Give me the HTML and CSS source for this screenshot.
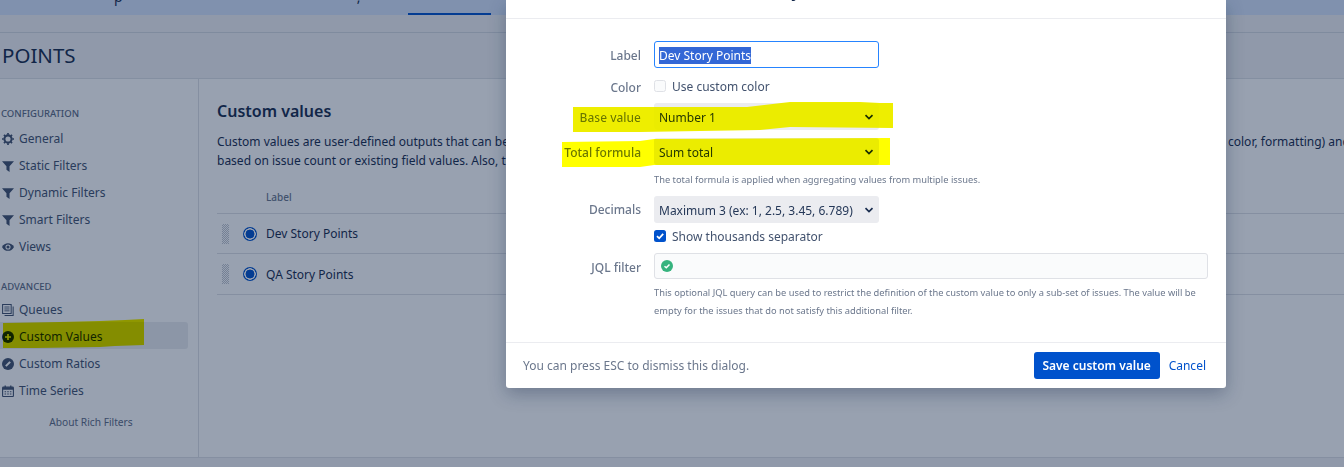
FILE: index.html
```html
<!DOCTYPE html>
<html lang="en">
<head>
<meta charset="utf-8">
<title>Custom values</title>
<link rel="stylesheet" href="styles.css">
</head>
<body>
<div class="banner"><span class="b1">p</span><span class="b2">,</span><a class="b3" href="#">Learn more</a></div>
<div class="subbar"></div>
<header class="pagehead"><h1>POINTS</h1></header>
<div class="layout">
  <nav class="side">
    <div class="sec">CONFIGURATION</div>
    <a class="item"><svg class="ic" viewBox="0 0 14 14"><circle cx="7" cy="7" r="4.2" fill="none" stroke="#42526e" stroke-width="2.4"/><path d="M6 0h2v2H6zM6 12h2v2H6zM0 6h2v2H0zM12 6h2v2h-2zM1.600 3 3 1.600l1.400 1.400L3 4.400zM9.600 11 11 9.600l1.400 1.400-1.400 1.400zM11 1.600 12.400 3 11 4.400 9.600 3zM3 9.600 4.400 11 3 12.400 1.600 11z" fill="#42526e"/></svg>General</a>
    <a class="item"><svg class="ic" viewBox="0 0 14 14"><path d="M0 1.500h14L8.800 7.400V14L5.200 11.500V7.400z" fill="#42526e"/></svg>Static Filters</a>
    <a class="item"><svg class="ic" viewBox="0 0 14 14"><path d="M0 1.500h14L8.800 7.400V14L5.200 11.500V7.400z" fill="#42526e"/></svg>Dynamic Filters</a>
    <a class="item"><svg class="ic" viewBox="0 0 14 14"><path d="M0 1.500h14L8.800 7.400V14L5.200 11.500V7.400z" fill="#42526e"/></svg>Smart Filters</a>
    <a class="item"><svg class="ic" viewBox="0 0 14 14"><path d="M0 7c1.700-3.200 4-4.500 7-4.500s5.300 1.300 7 4.500c-1.700 3.200-4 4.500-7 4.500S1.700 10.200 0 7z" fill="#42526e"/><circle cx="7" cy="7" r="3" fill="#fff"/><circle cx="7" cy="7" r="1.800" fill="#42526e"/></svg>Views</a>
    <div class="sec sec2">ADVANCED</div>
    <a class="item"><svg class="ic" viewBox="0 0 14 14"><path d="M.7.700h10v10.300H.7z" fill="none" stroke="#42526e" stroke-width="1.200"/><path d="M2.800 3.500h6M2.800 5.800h6M2.800 8h6" stroke="#42526e"/><path d="M13 3v10.300H3" fill="none" stroke="#42526e" stroke-width="1.200"/></svg>Queues</a>
    <a class="item on"><svg class="ic" viewBox="0 0 14 14"><circle cx="7" cy="7" r="7" fill="#172b4d"/><path d="M3.500 7h7M7 3.500v7" stroke="#fff" stroke-width="1.900"/></svg>Custom Values</a>
    <a class="item"><svg class="ic" viewBox="0 0 14 14"><circle cx="7" cy="7" r="7" fill="#42526e"/><path d="M4.500 9.500 9.500 4.500" stroke="#fff" stroke-width="2.400"/></svg>Custom Ratios</a>
    <a class="item"><svg class="ic" viewBox="0 0 14 14"><rect x=".7" y="2.500" width="12.600" height="11" rx="1" fill="none" stroke="#42526e" stroke-width="1.300"/><path d="M1 2.500h12V5.500H1zM3 .5h1.500v2H3zM9.500 .5H11v2H9.500z" fill="#42526e"/><path d="M3 7.800h1.800M6.100 7.800h1.800M9.200 7.800H11M3 10.500h1.800M6.100 10.500h1.800M9.200 10.500H11" stroke="#42526e" stroke-width="1.300"/></svg>Time Series</a>
    <a class="about">About Rich Filters</a>
  </nav>
  <main class="content">
    <h2>Custom values</h2>
    <div class="para">
      <div class="line"><span class="lead">Custom values are user-defined outputs that can be displayed in views and have their own display settings (</span><span>color, formatting) and</span></div>
      <div class="line">based on issue count or existing field values. Also, they can be used in sorting and grouping.</div>
    </div>
    <div class="thead">Label</div>
    <div class="row"><span class="grip"></span><span class="radio"></span><span>Dev Story Points</span></div>
    <div class="row"><span class="grip"></span><span class="radio"></span><span>QA Story Points</span></div>
  </main>
</div>
<div class="pagefoot"></div>

<div class="blanket"></div>

<section class="modal">
  <div class="mhead"><span class="mtitle">Modify custom value fields</span></div>
  <form class="mbody">
    <div class="f f-label"><label>Label</label><div class="input"><span class="sel">Dev Story Points</span></div></div>
    <div class="f f-color"><label>Color</label><div class="check"><span class="box"></span>Use custom color</div></div>
    <div class="f f-base"><label>Base value</label><div class="select">Number 1<svg class="chev" viewBox="0 0 10 6"><path d="M1.500 1.200 5 4.500l3.500-3.300" fill="none" stroke="#172b4d" stroke-width="1.700"/></svg></div></div>
    <div class="f f-total"><label>Total formula</label><div class="select">Sum total<svg class="chev" viewBox="0 0 10 6"><path d="M1.500 1.200 5 4.500l3.500-3.300" fill="none" stroke="#172b4d" stroke-width="1.700"/></svg></div></div>
    <div class="f f-h1"><span></span><p class="help">The total formula is applied when aggregating values from multiple issues.</p></div>
    <div class="f f-dec"><label>Decimals</label><div class="select">Maximum 3 (ex: 1, 2.5, 3.45, 6.789)<svg class="chev" viewBox="0 0 10 6"><path d="M1.500 1.200 5 4.500l3.500-3.300" fill="none" stroke="#172b4d" stroke-width="1.700"/></svg></div></div>
    <div class="f f-sep"><span></span><div class="check"><svg class="box-on" viewBox="0 0 12 12"><rect width="12" height="12" rx="2.500" fill="#0052cc"/><path d="M3 6.200 5.200 8.300 9.200 3.900" fill="none" stroke="#fff" stroke-width="1.800"/></svg>Show thousands separator</div></div>
    <div class="f f-jql"><label>JQL filter</label><div class="jql"><svg class="ok" viewBox="0 0 12 12"><circle cx="6" cy="6" r="6" fill="#36b37e"/><path d="M3.500 6.200 5.300 7.800 8.500 4.500" fill="none" stroke="#fff" stroke-width="1.500"/></svg></div></div>
    <div class="f f-h2"><span></span><p class="help">This optional JQL query can be used to restrict the definition of the custom value to only a sub-set of issues. The value will be<br>empty for the issues that do not satisfy this additional filter.</p></div>
  </form>
  <footer class="mfoot">
    <span class="hint">You can press ESC to dismiss this dialog.</span>
    <button class="save" type="button">Save custom value</button>
    <a class="cancel">Cancel</a>
  </footer>
</section>

<svg class="marks blend-mult" viewBox="0 0 1344 467" aria-hidden="true">
  <polygon class="m1" points="3,323 60,322 100,321 125,320 144,319 144,345 115,346 100,347 37,348 3,348"/>
  <polygon class="m2" points="562,142 640,141 654,139 890,138 890,165 654,165 640,167 562,167"/>
</svg>
<svg class="marks blend-dark" viewBox="0 0 1344 467" aria-hidden="true">
  <polygon class="m3" points="573,107 747,107 790,102 860,102 880,103 893,103 893,128 790,127 760,130 640,132 573,132"/>
</svg>
</body>
</html>
```
FILE: styles.css
```css
* { box-sizing: border-box; }
html, body { margin: 0; height: 467px; overflow: hidden; }
body {
  font-family: "Noto Sans", "Open Sans", sans-serif;
  font-size: 12px;
  color: #172b4d;
  background: #fff;
}
.banner {
  height: 15px;
  background: #d6e4fc;
  position: relative;
  overflow: hidden;
  display: flex;
  align-items: flex-end;
  font-size: 14px;
  line-height: 15px;
}
.banner span { display: block; transform: translateY(-11px); }
.b1 { margin-left: 114px; }
.b2 { margin-left: 234px; }
.b3 { display: block; margin-left: 48px; color: transparent; width: 83px; overflow: hidden; white-space: nowrap; height: 2px; background: #0052cc; }
.subbar { height: 18px; background: #f1f2f4; border-bottom: 1px solid #d4d9e0; }
.pagehead {
  height: 46px;
  background: #f1f2f4;
  border-bottom: 1px solid #dde1e6;
  padding: 0 0 2px 2px;
  display: flex;
  align-items: center;
}
h1 { margin: 0; font-size: 20.500px; font-weight: 400; color: #172b4d; line-height: 40px; }
.layout { display: flex; height: 379px; border-bottom: 1px solid #dfe1e6; }
.side {
  width: 199px;
  flex: none;
  border-right: 1px solid #dfe1e6;
  padding-top: 27px;
  padding-right: 10px;
  display: flex;
  flex-direction: column;
}
.sec { font-size: 9.500px; font-weight: 500; color: #5e6c84; line-height: 16px; padding-left: 1px; margin-bottom: 3px; }
.sec2 { margin-top: 19px; margin-bottom: 0; }
.item {
  height: 27px;
  display: flex;
  align-items: center;
  gap: 5px;
  padding-left: 2px;
  color: #42526e;
  border-radius: 0 3px 3px 0;
}
.sec2 ~ .item { padding-top: 2px; }
.item.on { background: #ebedf0; color: #172b4d; }
.ic { width: 12px; height: 12px; flex: none; }
.about { margin-top: 11px; line-height: 16px; text-align: center; font-size: 10.200px; color: #5e6c84; padding-right: 6px; }
.content { flex: 1; padding-left: 18px; min-width: 0; }
h2 { margin: 21px 0 0; font-size: 16px; font-weight: 600; line-height: 22px; color: #172b4d; }
.para { margin-top: 11px; line-height: 18.500px; white-space: nowrap; color: #172b4d; }
.line { display: flex; overflow: hidden; }
.lead { flex: 0 0 1011px; overflow: hidden; }
.thead {
  margin-top: 12px;
  height: 32px;
  line-height: 30px;
  padding-left: 49px;
  font-size: 10px;
  font-weight: 500;
  color: #6b778c;
  border-bottom: 1px solid #dfe1e6;
}
.row {
  height: 41px;
  border-bottom: 1px solid #dfe1e6;
  display: flex;
  align-items: center;
  color: #172b4d;
}
.thead + .row { height: 40px; }
.grip {
  width: 7px;
  height: 20px;
  margin-left: 5px;
  background: repeating-conic-gradient(#c1c7d0 0 25%, transparent 0 50%) 0 0 / 2px 2px;
}
.radio {
  width: 14px;
  height: 14px;
  margin: 0 9px 0 14px;
  border-radius: 50%;
  background: radial-gradient(circle, #0052cc 0 4.200px, #fff 4.700px 5.500px, #0052cc 6px);
}
.pagefoot { height: 9px; background: #f1f2f4; }
.blanket { position: fixed; inset: 0; background: rgba(9, 30, 66, 0.42); }
.modal {
  position: fixed;
  left: 506px;
  top: 0;
  width: 720px;
  height: 388px;
  background: #fff;
  border-radius: 0 0 3px 3px;
  box-shadow: 0 6px 18px rgba(9, 30, 66, 0.3);
  display: flex;
  flex-direction: column;
}
.mhead {
  height: 19px;
  flex: none;
  border-bottom: 1px solid #ebecf0;
  overflow: hidden;
  text-align: center;
  line-height: 6px;
  padding-right: 26px;
}
.mtitle { display: block; margin-top: -12px; font-size: 17px; font-weight: 500; white-space: nowrap; }
.mbody { flex: 1; padding: 22px 18px 0 0; }
.f { display: grid; grid-template-columns: 135px 1fr; column-gap: 13px; align-items: center; }
.f label { text-align: right; color: #6b778c; font-weight: 500; padding-top: 2px; }
.f-dec label { padding-top: 0; }
.f-color { margin-top: 8px; height: 20px; }
.f-base { margin-top: 7px; }
.f-total { margin-top: 8px; }
.f-h1 { margin-top: 8px; }
.f-dec { margin-top: 9px; }
.f-sep { margin-top: 4px; }
.f-jql { margin-top: 8px; }
.f-h2 { margin-top: 5px; }
.input {
  width: 225px;
  height: 27px;
  border: 1px solid #2684ff;
  border-radius: 3px;
  padding: 2px 0 0 4px;
  display: flex;
  align-items: center;
}
.sel { background: #3367d6; color: #fff; line-height: 17px; }
.check { display: flex; align-items: center; gap: 6px; color: #42526e; height: 18px; }
.box { width: 12px; height: 12px; border: 1px solid #dfe1e6; border-radius: 2.500px; background: #fafbfc; flex: none; }
.box-on { width: 12px; height: 12px; flex: none; }
.select {
  width: 225px;
  height: 27px;
  background: #ebecf0;
  border-radius: 3px;
  padding: 2px 0 0 5px;
  display: flex;
  align-items: center;
  justify-content: space-between;
  color: #253858;
  white-space: nowrap;
}
.chev { width: 10px; height: 6px; margin: 0 5px 2px 0; }
.help { margin: 0; font-size: 9.300px; line-height: 18px; color: #6b778c; white-space: nowrap; }
.f-h1 .help { line-height: 14px; }
.jql {
  height: 26px;
  background: #fafbfc;
  border: 1px solid #dfe1e6;
  border-radius: 3px;
  padding-left: 6px;
  display: flex;
  align-items: center;
}
.ok { width: 12px; height: 12px; }
.mfoot {
  height: 46px;
  flex: none;
  border-top: 1px solid #ebecf0;
  padding: 0 20px 0 17px;
  display: flex;
  align-items: center;
}
.hint { flex: 1; color: #6b778c; }
.save {
  width: 126px;
  height: 27px;
  border: 0;
  border-radius: 3px;
  background: #0052cc;
  color: #fff;
  font: 600 12px "Noto Sans", sans-serif;
  padding: 0;
}
.cancel { margin-left: 9px; color: #0052cc; }
.marks { position: fixed; inset: 0; width: 1344px; height: 467px; pointer-events: none; }
.blend-mult { mix-blend-mode: multiply; }
.blend-dark { mix-blend-mode: darken; }
.m1 { fill: #f0f000; }
.m2 { fill: #ffff00; }
.m3 { fill: #eeee00; }
```
